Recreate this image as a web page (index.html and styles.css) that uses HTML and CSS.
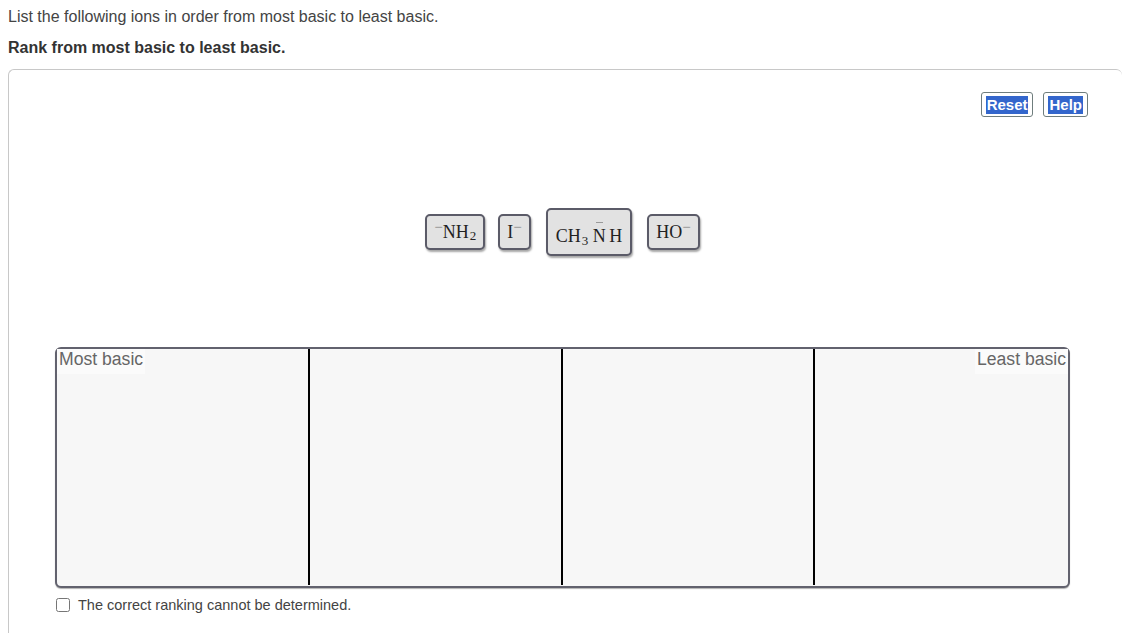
FILE: index.html
```html
<!DOCTYPE html>
<html lang="en">
<head>
  <meta charset="UTF-8">
  <title>Ranking</title>
  <link rel="stylesheet" href="styles.css">
</head>
<body>
  <p class="prompt">List the following ions in order from most basic to least basic.</p>
  <p class="instr">Rank from most basic to least basic.</p>

  <div class="widget">
    <div class="toolbar">
      <button class="tool-btn"><span>Reset</span></button>
      <button class="tool-btn"><span>Help</span></button>
    </div>

    <div class="pool">
      <div class="tile"><sup class="chg">&minus;</sup>NH<sub>2</sub></div>
      <div class="tile">I<sup class="chg">&minus;</sup></div>
      <div class="tile tall">CH<sub>3</sub>&nbsp;<span class="bar">N</span>&thinsp;H</div>
      <div class="tile">HO<sup class="chg">&minus;</sup></div>
    </div>

    <div class="board">
      <div class="slot"><span class="slot-label">Most basic</span></div>
      <div class="slot"></div>
      <div class="slot"></div>
      <div class="slot right"><span class="slot-label">Least basic</span></div>
    </div>

    <label class="undetermined">
      <input type="checkbox">
      <span>The correct ranking cannot be determined.</span>
    </label>
  </div>
</body>
</html>
```

FILE: styles.css
```css
* { box-sizing: border-box; }
body { margin: 8px 0 0 8px; font-family: 'Liberation Sans', Arial, sans-serif; font-size: 16px; color: #333; background: #fff; overflow: hidden; }
p { margin: 0; line-height: 18px; }
.prompt { color: #444; }
.instr { margin-top: 13px; font-weight: bold; color: #333; }

.widget { margin-top: 12px; border: 1px solid #c8c8c8; border-right: none; border-bottom: none; border-top-left-radius: 6px; border-top-right-radius: 6px; height: 570px; }

.toolbar { display: flex; justify-content: flex-end; gap: 10px; margin-top: 22px; padding-right: 34px; height: 25px; }
.tool-btn { display: flex; align-items: center; justify-content: center; height: 25px; padding: 0 4px; border: 1px solid #6f7d7d; border-radius: 3px; background: #fff; cursor: pointer; }
.tool-btn span { background: #3366cc; color: #fff; font-family: 'Liberation Sans', Arial, sans-serif; font-weight: bold; font-size: 15px; line-height: 18px; padding: 0 1px; }

.pool { display: flex; justify-content: center; align-items: center; gap: 13px; height: 230px; margin: 0 52px 0 46px; }
.tile { display: flex; align-items: center; height: 36px; padding: 0 7px; background: #e2e2e2; border: 2px solid #5b5b68; border-radius: 5px; box-shadow: 1px 2px 2px rgba(0,0,0,0.35); font-family: 'Liberation Serif', 'DejaVu Serif', serif; font-size: 18px; color: #222; }
.tile.tall { height: 48px; padding: 9px 8px 0; margin: 0 2px; }
.tile sub { font-size: 13px; position: relative; top: 4px; vertical-align: baseline; margin-left: 1px; }
.chg { font-size: 15px; color: #888; position: relative; top: -5px; vertical-align: baseline; }
.bar { position: relative; }
.bar::before { content: ''; position: absolute; left: 3px; right: 3px; top: -4px; border-top: 1px solid #999; }

.board { display: grid; grid-template-columns: repeat(4, 1fr); height: 241px; margin: 0 52px 0 46px; background: #f7f7f7; border: 2px solid #62626e; border-radius: 6px; box-shadow: 0 1px 1px rgba(0,0,0,0.3); }
.slot { border-right: 2px solid #000; margin-bottom: 1px; }
.slot.right { border-right: none; text-align: right; }
.slot-label { display: inline-block; padding: 0 2px 3px 2px; background: #fbfbfb; font-size: 17.6px; line-height: 21px; color: #666; height: 25px; }

.undetermined { display: flex; align-items: center; gap: 8px; margin: 9px 0 0 46px; color: #444; font-size: 14.5px; }
.undetermined input { margin: 0 0 0 1px; width: 14px; height: 14px; }
```
